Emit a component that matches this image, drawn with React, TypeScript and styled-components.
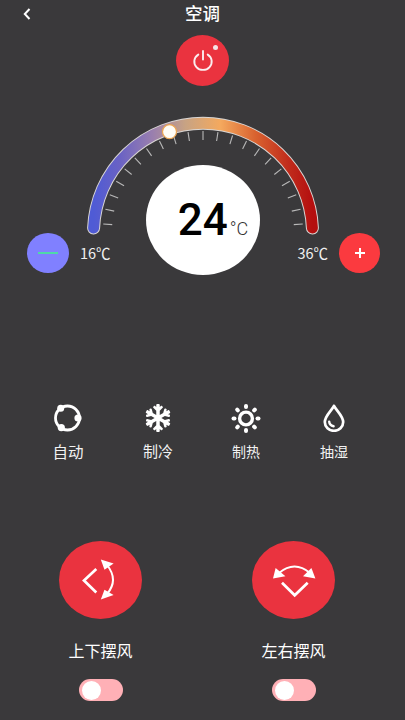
import styled, { createGlobalStyle } from 'styled-components';
import { FaSnowflake } from 'react-icons/fa';

const CJK = '"Noto Sans CJK SC", "Noto Sans", sans-serif';

const GlobalStyle = createGlobalStyle`
  html, body {
    margin: 0;
    padding: 0;
    background: #3a393b;
  }
`;

const Page = styled.div`
  width: 405px;
  height: 720px;
  overflow: hidden;
  background: #3a393b;
  color: #fff;
  font-family: ${CJK};
`;

const Header = styled.header`
  height: 28px;
  display: grid;
  grid-template-columns: 23px 8px 1fr 31px;
  align-items: center;
`;

const BackIcon = styled.svg`
  grid-column: 2;
  width: 8px;
  height: 12px;
  margin-top: -1px;
`;

const Title = styled.h1`
  grid-column: 3;
  margin: -2px 0 0;
  font-size: 17.5px;
  font-weight: 500;
  line-height: 28px;
  text-align: center;
`;

const PowerButton = styled.button`
  position: relative;
  display: flex;
  align-items: center;
  justify-content: center;
  width: 53px;
  height: 51px;
  margin: 7px auto 0;
  padding: 0;
  border: 0;
  border-radius: 50%;
  background: #ea333f;
`;

const PowerDot = styled.span`
  position: absolute;
  top: 10px;
  right: 11px;
  width: 5px;
  height: 5px;
  border-radius: 50%;
  background: #f4e4e6;
`;

const GaugeArea = styled.section`
  display: grid;
  height: 163px;
  margin-top: 26px;
  & > * {
    grid-area: 1 / 1;
  }
`;

const GaugeArc = styled.svg`
  justify-self: center;
  align-self: start;
  width: 240px;
  height: 130px;
`;

const Dial = styled.div`
  justify-self: center;
  align-self: end;
  display: flex;
  align-items: baseline;
  justify-content: center;
  width: 114px;
  height: 110px;
  border-radius: 50%;
  background: #fff;
  color: #000;
  line-height: 110px;
`;

const DialValue = styled.span`
  margin-left: 21px;
  font-family: Roboto, sans-serif;
  font-size: 44px;
  font-weight: 500;
`;

const DialUnit = styled.span`
  margin-left: 2px;
  font-family: Roboto, sans-serif;
  font-size: 18px;
  font-weight: 300;
  color: #333;
`;

const StepRow = styled.div`
  align-self: end;
  display: flex;
  align-items: center;
  justify-content: space-between;
  height: 40px;
  padding: 0 25px 2px 27px;
  pointer-events: none;
`;

const StepGroup = styled.div`
  display: flex;
  align-items: center;
  gap: 11px;
`;

const StepButton = styled.button<{ $color: string; $width: number }>`
  display: flex;
  align-items: center;
  justify-content: center;
  width: ${(p) => p.$width}px;
  height: 40px;
  padding: 0;
  border: 0;
  border-radius: 50%;
  background: ${(p) => p.$color};
`;

const RangeLabel = styled.span`
  font-size: 14.5px;
  line-height: 20px;
  color: #f0f0f0;
`;

const ModeRow = styled.section`
  display: grid;
  grid-template-columns: 90px 90px 86px 90px;
  margin-top: 129px;
  padding-left: 23px;
`;

const Mode = styled.div`
  display: flex;
  flex-direction: column;
  align-items: center;
`;

const ModeIcon = styled.div`
  display: flex;
  align-items: center;
  justify-content: center;
  height: 28px;
`;

const ModeLabel = styled.span<{ $size: number }>`
  margin-top: 7.5px;
  font-size: ${(p) => p.$size}px;
  line-height: 22px;
  color: #f2f2f2;
`;

const SwingRow = styled.section`
  display: grid;
  grid-template-columns: 193px 193px;
  margin-top: 79.5px;
  padding-left: 4px;
`;

const Swing = styled.div`
  display: flex;
  flex-direction: column;
  align-items: center;
`;

const SwingButton = styled.button`
  width: 83px;
  height: 78px;
  padding: 0;
  border: 0;
  border-radius: 50%;
  background: #ea333f;
`;

const SwingLabel = styled.span`
  margin-top: 20px;
  font-size: 16px;
  font-weight: 400;
  line-height: 22px;
`;

const Toggle = styled.div`
  display: flex;
  align-items: center;
  box-sizing: border-box;
  width: 44px;
  height: 22px;
  margin-top: 18px;
  padding: 0 3px;
  border-radius: 11px;
  background: #ffb0b6;
`;

const Knob = styled.span`
  width: 19px;
  height: 19px;
  border-radius: 50%;
  background: #fff;
`;

const TICK_COUNT = 21;

const ticks = Array.from({ length: TICK_COUNT }, (_, i) => {
  const a = ((4 + i * 8.6) * Math.PI) / 180;
  const cx = 120;
  const cy = 119;
  return {
    x1: cx - 91 * Math.cos(a),
    y1: cy - 91 * Math.sin(a),
    x2: cx - 100 * Math.cos(a),
    y2: cy - 100 * Math.sin(a),
  };
});

const ARC = 'M10.6 116 A109.5 109.5 0 0 1 229.4 116';

const Gauge = () => (
  <GaugeArc viewBox="0 0 240 130">
    <defs>
      <linearGradient id="arc" x1="0" x2="1" y1="0" y2="0">
        <stop offset="0" stopColor="#4f5bd5" />
        <stop offset="0.12" stopColor="#6a62c4" />
        <stop offset="0.27" stopColor="#9a7fae" />
        <stop offset="0.42" stopColor="#c8a383" />
        <stop offset="0.58" stopColor="#f4a95e" />
        <stop offset="0.74" stopColor="#d9622f" />
        <stop offset="0.89" stopColor="#c02c1c" />
        <stop offset="1" stopColor="#b40f0f" />
      </linearGradient>
    </defs>
    {ticks.map((t, i) => (
      <line key={i} {...t} stroke="#b9b9b9" strokeWidth="1.1" />
    ))}
    <path d={ARC} fill="none" stroke="#d9d6d4" strokeWidth="13" strokeLinecap="round" />
    <path d={ARC} fill="none" stroke="url(#arc)" strokeWidth="11" strokeLinecap="round" />
    <circle cx="86.5" cy="19.7" r="7" fill="#fffdf6" stroke="#eba653" strokeWidth="1.2" />
  </GaugeArc>
);

const AutoIcon = () => (
  <svg width="30" height="28" viewBox="0 0 30 28">
    <circle cx="14.5" cy="14" r="12" fill="none" stroke="#fff" strokeWidth="2.8" />
    <circle cx="7.7" cy="4.2" r="3.5" fill="#fff" />
    <circle cx="25" cy="14" r="3.6" fill="#fff" />
    <circle cx="8.3" cy="23.6" r="3.6" fill="#fff" />
  </svg>
);

const SUN_RAYS = [0, 45, 90, 135, 180, 225, 270, 315];

const SunIcon = () => (
  <svg width="30" height="29" viewBox="0 0 30 29">
    <circle cx="15" cy="14.5" r="6.4" fill="none" stroke="#fff" strokeWidth="3.4" />
    {SUN_RAYS.map((deg) => (
      <line
        key={deg}
        x1="15"
        y1="2"
        x2="15"
        y2="3"
        stroke="#fff"
        strokeWidth="4"
        strokeLinecap="round"
        transform={`rotate(${deg} 15 14.5)`}
      />
    ))}
  </svg>
);

const DropIcon = () => (
  <svg width="22" height="28" viewBox="0 0 22 28">
    <path
      d="M11 1.8C8.6 6.6 1.8 12 1.8 18a9.2 8.8 0 0 0 18.4 0C20.2 12 13.4 6.6 11 1.8Z"
      fill="none"
      stroke="#fff"
      strokeWidth="2.7"
      strokeLinejoin="round"
    />
    <path d="M6.2 17.6c.2 2.6 2 4.2 4.4 4.6" fill="none" stroke="#fff" strokeWidth="2.4" strokeLinecap="round" />
  </svg>
);

const SwingVerticalIcon = () => (
  <svg width="83" height="78" viewBox="0 0 83 78">
    <path d="M37.3 28 25 39.5 37.3 51.5" fill="none" stroke="#fff" strokeWidth="2.7" />
    <path d="M48 24Q60 39 48 53" fill="none" stroke="#fff" strokeWidth="2" />
    <path d="M41.8 18.6 54.6 22.4 45.5 28.8Z" fill="#fff" />
    <path d="M41.8 58.4 54.6 54 45.5 48.8Z" fill="#fff" />
  </svg>
);

const SwingHorizontalIcon = () => (
  <svg width="83" height="78" viewBox="0 0 83 78">
    <path d="M30 41.7 42.7 54.3 55.7 41.7" fill="none" stroke="#fff" strokeWidth="2.7" />
    <path d="M27 32Q42.5 19 58 32" fill="none" stroke="#fff" strokeWidth="2" />
    <path d="M21 37.6 23.6 27 33.4 35.2Z" fill="#fff" />
    <path d="M63.4 37.6 59.4 27 51 35.2Z" fill="#fff" />
  </svg>
);

const modes = [
  { label: '自动', size: 15.5, icon: <AutoIcon /> },
  { label: '制冷', size: 15, icon: <FaSnowflake size={28} color="#fff" /> },
  { label: '制热', size: 14, icon: <SunIcon /> },
  { label: '抽湿', size: 14, icon: <DropIcon /> },
];

const swings = [
  { label: '上下摆风', icon: <SwingVerticalIcon /> },
  { label: '左右摆风', icon: <SwingHorizontalIcon /> },
];

const App = () => (
  <Page>
    <GlobalStyle />
    <Header>
      <BackIcon viewBox="0 0 8 12">
        <path d="M6.5 1 1.8 6l4.7 5" fill="none" stroke="#fff" strokeWidth="2" />
      </BackIcon>
      <Title>空调</Title>
    </Header>
    <PowerButton>
      <svg width="22" height="21" viewBox="0 0 22 21">
        <path d="M6.3 4.6a8.7 8.3 0 1 0 9.4 0" fill="none" stroke="#fbeef0" strokeWidth="1.9" strokeLinecap="round" />
        <path d="M11 1v8.6" fill="none" stroke="#fbeef0" strokeWidth="1.9" strokeLinecap="round" />
      </svg>
      <PowerDot />
    </PowerButton>
    <GaugeArea>
      <Gauge />
      <Dial>
        <DialValue>24</DialValue>
        <DialUnit>°C</DialUnit>
      </Dial>
      <StepRow>
        <StepGroup>
          <StepButton $color="#8080ff" $width={42}>
            <svg width="20" height="2" viewBox="0 0 20 2">
              <rect width="20" height="2" fill="#4fd8a8" />
            </svg>
          </StepButton>
          <RangeLabel>16℃</RangeLabel>
        </StepGroup>
        <StepGroup>
          <RangeLabel>36℃</RangeLabel>
          <StepButton $color="#fb3a3f" $width={41}>
            <svg width="12" height="12" viewBox="0 0 12 12">
              <path d="M6 1v10M1 6h10" stroke="#fff" strokeWidth="2" />
            </svg>
          </StepButton>
        </StepGroup>
      </StepRow>
    </GaugeArea>
    <ModeRow>
      {modes.map((m) => (
        <Mode key={m.label}>
          <ModeIcon>{m.icon}</ModeIcon>
          <ModeLabel $size={m.size}>{m.label}</ModeLabel>
        </Mode>
      ))}
    </ModeRow>
    <SwingRow>
      {swings.map((s) => (
        <Swing key={s.label}>
          <SwingButton>{s.icon}</SwingButton>
          <SwingLabel>{s.label}</SwingLabel>
          <Toggle>
            <Knob />
          </Toggle>
        </Swing>
      ))}
    </SwingRow>
  </Page>
);

export default App;
